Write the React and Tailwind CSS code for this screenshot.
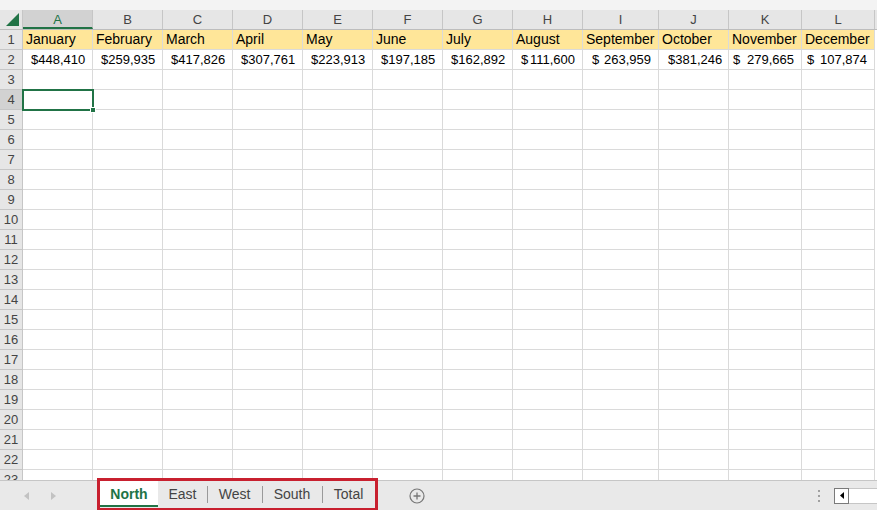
import React from 'react';

const COLS = [
  { key: 'A', w: 70, month: 'January', value: '448,410', pl: 8 },
  { key: 'B', w: 70, month: 'February', value: '259,935', pl: 8 },
  { key: 'C', w: 70, month: 'March', value: '417,826', pl: 8 },
  { key: 'D', w: 70, month: 'April', value: '307,761', pl: 8 },
  { key: 'E', w: 70, month: 'May', value: '223,913', pl: 8 },
  { key: 'F', w: 70, month: 'June', value: '197,185', pl: 8 },
  { key: 'G', w: 70, month: 'July', value: '162,892', pl: 8 },
  { key: 'H', w: 70, month: 'August', value: '111,600', pl: 8 },
  { key: 'I', w: 76, month: 'September', value: '263,959', pl: 9 },
  { key: 'J', w: 70, month: 'October', value: '381,246', pl: 9 },
  { key: 'K', w: 73, month: 'November', value: '279,665', pl: 4 },
  { key: 'L', w: 73, month: 'December', value: '107,874', pl: 5 },
];

const ROWS = Array.from({ length: 23 }, (_, i) => i + 1);
const TABS = [
  { name: 'North', w: 58 },
  { name: 'East', w: 49 },
  { name: 'West', w: 55 },
  { name: 'South', w: 60 },
  { name: 'Total', w: 53 },
];

function Corner() {
  return (
    <div className="w-[23px] h-full border-r border-[#c6c6c6] flex items-end justify-end pr-[3px] pb-[3px]">
      <svg width="13" height="13" viewBox="0 0 13 13">
        <polygon points="13,0 13,13 0,13" fill="#217346" />
      </svg>
    </div>
  );
}

function Cell({ col, row }) {
  if (row === 1) {
    return (
      <div style={{ width: col.w }} className="h-full border-r border-b border-[#dadada] bg-[#ffe699] pl-[3px] text-[14px] leading-[19px] text-black whitespace-nowrap overflow-hidden">
        {col.month}
      </div>
    );
  }
  if (row === 2) {
    return (
      <div style={{ width: col.w, paddingLeft: col.pl }} className="h-full border-r border-b border-[#dadada] bg-white pr-[7px] flex justify-between text-[13px] leading-[19px] text-black whitespace-nowrap">
        <span>$</span>
        <span>{col.value}</span>
      </div>
    );
  }
  return <div style={{ width: col.w }} className="h-full border-r border-b border-[#dadada] bg-white" />;
}

export default function App() {
  return (
    <div className="w-[877px] h-[510px] flex flex-col overflow-hidden bg-white" style={{ fontFamily: '"Liberation Sans", Arial, sans-serif' }}>
      <div className="h-[10px] bg-[#f3f3f3] shrink-0" />

      <div className="relative flex-1 overflow-hidden">
        {/* column headers */}
        <div className="flex h-[20px] bg-[#e6e6e6] border-b border-[#bdbdbd]">
          <Corner />
          {COLS.map(c => (
            <div
              key={c.key}
              style={{ width: c.w }}
              className={
                c.key === 'A'
                  ? 'h-full border-r border-[#c6c6c6] bg-[#d2d2d2] text-[#217346] border-b-2 border-b-[#217346] text-center text-[13px] leading-[19px]'
                  : 'h-full border-r border-[#c6c6c6] text-[#444] text-center text-[13px] leading-[19px]'
              }
            >
              {c.key}
            </div>
          ))}
        </div>

        {/* rows */}
        {ROWS.map(r => (
          <div key={r} className="flex h-[20px]">
            <div className={(r === 4 ? 'bg-[#d2d2d2] ' : 'bg-[#e6e6e6] ') + 'w-[23px] h-full border-r border-b border-[#c6c6c6] text-center text-[13px] leading-[19px] text-[#444]'}>
              {r}
            </div>
            {COLS.map(c => <Cell key={c.key} col={c} row={r} />)}
          </div>
        ))}

        {/* selected cell A4 */}
        <div className="absolute left-[22px] top-[79px] w-[72px] h-[22px] border-2 border-[#217346]">
          <div className="absolute -right-[4px] -bottom-[4px] w-[6px] h-[6px] bg-[#217346] border border-white" />
        </div>
      </div>

      {/* sheet tab bar */}
      <div className="h-[30px] shrink-0 bg-[#e9e9e9] border-t border-[#c6c6c6] flex items-stretch relative">
        <div className="w-[100px] flex items-center pl-[24px] gap-[22px]">
          <svg width="5" height="8" viewBox="0 0 5 8"><polygon points="5,0 5,8 0,4" fill="#c2c2c2" /></svg>
          <svg width="5" height="8" viewBox="0 0 5 8"><polygon points="0,0 0,8 5,4" fill="#c2c2c2" /></svg>
        </div>

        <div className="relative flex items-stretch pb-[3px]">
          {TABS.map((t, i) => (
            <div key={t.name} style={{ width: t.w }} className="relative flex items-center justify-center">
              {i === 0 ? (
                <div className="absolute inset-0 bg-white border-b-2 border-[#217346]" />
              ) : null}
              {i > 1 ? <div className="absolute left-0 top-[5px] bottom-[4px] w-px bg-[#9a9a9a]" /> : null}
              <span className={i === 0 ? 'relative text-[14px] font-bold text-[#217346]' : 'relative text-[14px] text-[#444]'}>
                {t.name}
              </span>
            </div>
          ))}
          <div className="absolute -left-[3px] -right-[3px] -top-[3px] bottom-[-1px] border-[3px] border-[#c8202f] pointer-events-none" />
        </div>

        <div className="flex items-center pl-[34px]">
          <svg width="16" height="16" viewBox="0 0 16 16">
            <circle cx="8" cy="8" r="7" fill="none" stroke="#777" strokeWidth="1.2" />
            <path d="M8 4.5v7M4.5 8h7" stroke="#777" strokeWidth="1.3" />
          </svg>
        </div>

        <div className="flex-1" />

        <div className="flex items-center pr-[0px]">
          <div className="flex flex-col gap-[3px] mr-[14px]">
            <div className="w-[2px] h-[2px] bg-[#a0a0a0]" />
            <div className="w-[2px] h-[2px] bg-[#a0a0a0]" />
            <div className="w-[2px] h-[2px] bg-[#a0a0a0]" />
          </div>
          <div className="w-[15px] h-[16px] border border-[#7a7a7a] bg-white flex items-center justify-center">
            <svg width="4" height="7" viewBox="0 0 4 7"><polygon points="4,0 4,7 0,3.5" fill="#000" /></svg>
          </div>
          <div className="w-[28px] h-[16px] border-y border-[#c6c6c6] bg-white" />
        </div>
      </div>
    </div>
  );
}
